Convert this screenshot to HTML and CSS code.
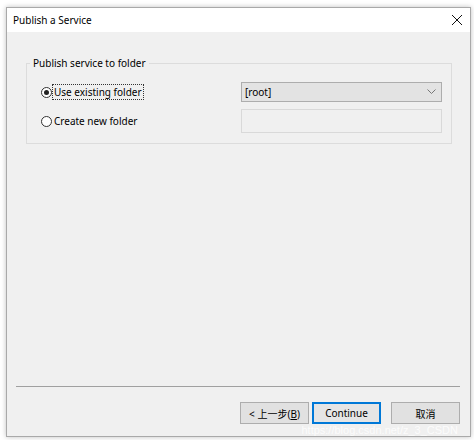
FILE: index.html
```html
<!DOCTYPE html>
<html lang="en">
<head>
<meta charset="utf-8">
<title>Publish a Service</title>
<link rel="stylesheet" href="styles.css">
</head>
<body>
<div class="window">
  <div class="titlebar">
    <span class="title">Publish a Service</span>
    <svg class="close" width="12" height="12" viewBox="0 0 12 12"><path d="M1 1 L11 11 M11 1 L1 11" stroke="#111" stroke-width="1" fill="none"/></svg>
  </div>
  <div class="content">
    <fieldset class="group">
      <legend>Publish service to folder</legend>
      <div class="grid">
        <label class="radio-row">
          <span class="radio checked"></span>
          <span class="label focus">Use existing folder</span>
        </label>
        <div class="combo">
          <span>[root]</span>
          <svg class="chev" width="9" height="6" viewBox="0 0 9 6"><path d="M0.5 0.5 L4.5 4.5 L8.5 0.5" stroke="#777" stroke-width="1" fill="none"/></svg>
        </div>
        <label class="radio-row">
          <span class="radio"></span>
          <span class="label">Create new folder</span>
        </label>
        <div class="textbox"></div>
      </div>
    </fieldset>
    <div class="spacer"></div>
    <div class="separator"></div>
    <div class="footer">
      <button class="btn">&lt; 上一步(<u>B</u>)</button>
      <button class="btn default">Continue</button>
      <button class="btn cancel">取消</button>
    </div>
    <div class="watermark">https://blog.csdn.net/z_3_CSDN</div>
  </div>
</div>
</body>
</html>
```
FILE: styles.css
```css
html, body {
  margin: 0;
  padding: 0;
  background: #ffffff;
}
body {
  width: 474px;
  height: 440px;
  overflow: hidden;
  font-family: "Noto Sans", "Noto Sans CJK SC", sans-serif;
  font-size: 10px;
  color: #000;
}
.window {
  margin: 7px 0 0 6px;
  width: 465px;
  height: 430px;
  box-sizing: border-box;
  border: 1px solid #a9a9a9;
  box-shadow: 0 0 5px rgba(0,0,0,0.25);
  display: flex;
  flex-direction: column;
  background: #f0f0f0;
}
.titlebar {
  height: 24px;
  background: #ffffff;
  display: flex;
  align-items: center;
  justify-content: space-between;
  padding: 0 6px 0 6px;
}
.title {
  font-size: 10px;
}
.close {
  margin-right: 1px;
}
.content {
  flex: 1;
  display: flex;
  flex-direction: column;
  position: relative;
}
.group {
  margin: 23px 18px 0 19px;
  padding: 11px 7px 10px 14px;
  border: 1px solid #dcdcdc;
  min-width: 0;
}
.group legend {
  padding: 0 3px;
  margin-left: -11px;
  line-height: 16px;
  height: 16px;
}
.grid {
  display: grid;
  grid-template-columns: 200px 201px;
  grid-template-rows: 20px 24px;
  row-gap: 7px;
}
.radio-row {
  display: flex;
  align-items: center;
}
.radio {
  width: 11px;
  height: 11px;
  box-sizing: border-box;
  border: 1px solid #333;
  border-radius: 50%;
  background: #fff;
  display: flex;
  align-items: center;
  justify-content: center;
  margin-right: 1px;
}
.radio.checked::after {
  content: "";
  width: 5px;
  height: 5px;
  border-radius: 50%;
  background: #222;
}
.label {
  padding: 0 1px;
  line-height: 14px;
}
.label.focus {
  outline: 1px dotted #333;
}
.combo {
  box-sizing: border-box;
  border: 1px solid #adadad;
  background: #e3e3e3;
  display: flex;
  align-items: center;
  justify-content: space-between;
  padding: 0 5px 0 3px;
}
.textbox {
  box-sizing: border-box;
  border: 1px solid #d9d9d9;
  background: #f0f0f0;
}
.spacer {
  flex: 1;
}
.separator {
  height: 1px;
  background: #a0a0a0;
  margin: 0 10px 0 9px;
}
.footer {
  display: flex;
  justify-content: flex-end;
  padding: 15px 10px 12px 0;
  gap: 3px;
}
.btn {
  width: 69px;
  height: 22px;
  box-sizing: border-box;
  border: 1px solid #adadad;
  background: #e1e1e1;
  font-family: "Noto Sans", "Noto Sans CJK SC", sans-serif;
  font-size: 10px;
  padding: 0;
  color: #000;
}
.btn.default {
  border: 2px solid #0078d7;
  background: #e5e5e5;
}
.btn.cancel {
  margin-left: 7px;
}
.watermark {
  position: absolute;
  right: 12px;
  bottom: 0;
  line-height: 12px;
  font-family: "Liberation Sans", sans-serif;
  font-size: 11px;
  color: rgba(255,255,255,0.8);
  pointer-events: none;
}
```
